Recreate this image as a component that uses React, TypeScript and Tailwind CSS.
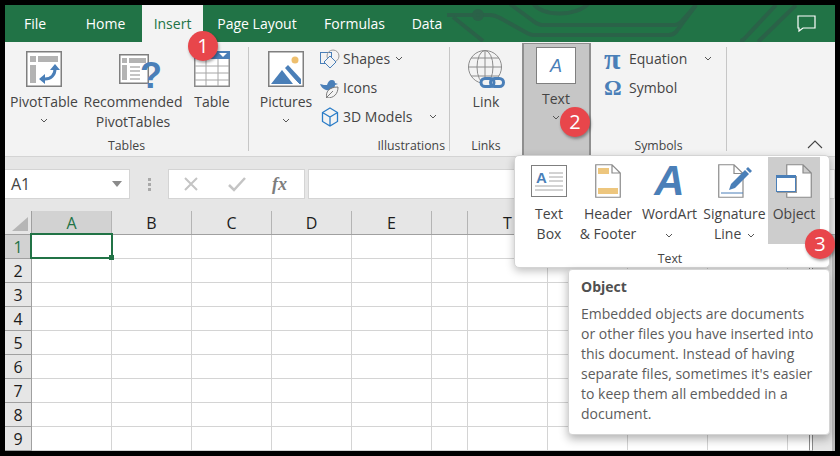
import { ReactNode } from "react";

const Chevron = ({ className = "" }: { className?: string }) => (
  <svg width="8" height="5" viewBox="0 0 8 5" className={className}>
    <path d="M1 1l3 3 3-3" fill="none" stroke="#555" strokeWidth="1" />
  </svg>
);

// ribbon icons
const PivotIcon = () => (
  <svg width="36" height="36" viewBox="0 0 36 36">
    <rect x="0.75" y="0.75" width="34.5" height="34.5" fill="#fff" stroke="#7f7f7f" strokeWidth="1.5" />
    <path d="M4 5h6v6H4zM12 5h20v6H12zM4 14h6v18H4z" fill="#b3b3b3" />
    <path d="M29 18c0 6-4 10-10 10" fill="none" stroke="#4a7fb8" strokeWidth="3" />
    <path d="M24 19l5-6 5 6zM19 23v10l-6-5z" fill="#4a7fb8" />
  </svg>
);

const RecommendedIcon = () => (
  <div className="relative w-[36px] h-[36px] ml-[8px]">
    <svg width="30" height="30" viewBox="0 0 30 30" className="absolute left-0 top-[3px]">
      <rect x="0.75" y="0.75" width="28.5" height="28.5" fill="#fff" stroke="#7f7f7f" strokeWidth="1.5" />
      <path d="M3 4h5v5H3zM10 4h17v5H10zM3 11h5v15H3z" fill="#b3b3b3" />
      <path d="M11 13h10M11 17h10M11 21h10M11 25h10" stroke="#b3b3b3" strokeWidth="1.5" />
    </svg>
    <span className="absolute left-[21px] top-[11px] text-[36px] leading-[27px] font-bold text-[#4a7fb8] font-['Liberation_Sans',sans-serif]">?</span>
  </div>
);

const TableIcon = () => (
  <svg width="36" height="36" viewBox="0 0 36 36">
    <rect x="0.75" y="0.75" width="34.5" height="34.5" fill="#fff" stroke="#8a8a8a" strokeWidth="1.5" />
    <rect x="0" y="0" width="36" height="8" fill="#4a7fb8" />
    <path d="M25 2h8l-4 4z" fill="#fff" />
    <path d="M1 15h34M1 22h34M1 29h34M12 8v27M24 8v27" stroke="#a6a6a6" strokeWidth="1" />
  </svg>
);

const PicturesIcon = () => (
  <svg width="36" height="36" viewBox="0 0 36 36">
    <rect x="0.75" y="0.75" width="34.5" height="34.5" fill="#fff" stroke="#7f7f7f" strokeWidth="1.5" />
    <circle cx="27" cy="9" r="3.5" fill="#eebf6e" />
    <path d="M3 33l11-14 11 14z" fill="#4a7fb8" />
    <path d="M17 17l3-3 13 14v5h-2z" fill="#4a7fb8" />
    <path d="M16 19l15 14" stroke="#fff" strokeWidth="1" />
  </svg>
);

const ShapesIcon = () => (
  <svg width="20" height="20" viewBox="0 0 20 20">
    <rect x="0.5" y="3.5" width="11" height="11" fill="none" stroke="#4a7fb8" />
    <circle cx="13" cy="7" r="6" fill="none" stroke="#9a9a9a" />
    <path d="M10 7l6 6-6 6-6-6z" fill="#f3f3f3" stroke="#4a7fb8" />
  </svg>
);

const IconsIcon = () => (
  <svg width="20" height="20" viewBox="0 0 20 20">
    <path d="M0 6c3 1 5 1 7 1 1-3 2-5 5-5 2 0 3 1 3 3l3 1-3 1c0 4-4 6-9 5-3-1-5-3-6-6z" fill="#4a7fb8" />
    <path d="M7 20c-2-6 2-11 11-11 0 7-4 11-11 11z" fill="#f3f3f3" stroke="#7a7a7a" />
    <path d="M6 20l7-7" stroke="#7a7a7a" />
  </svg>
);

const CubeIcon = () => (
  <svg width="20" height="20" viewBox="0 0 20 20">
    <path d="M10 1l7.5 4.5v9L10 19l-7.5-4.5v-9zM2.5 5.5L10 10l7.5-4.5M10 10v9" fill="none" stroke="#2a7cc7" strokeWidth="1.3" />
  </svg>
);

const LinkIcon = () => (
  <svg width="38" height="38" viewBox="0 0 38 38">
    <g fill="none" stroke="#8c8c8c" strokeWidth="1">
      <circle cx="18" cy="17" r="16.5" />
      <ellipse cx="18" cy="17" rx="8" ry="16.5" />
      <path d="M18 0v33M1 17h34M4 8h28M4 26h28" />
    </g>
    <g fill="none" stroke="#4a7fb8" strokeWidth="3">
      <rect x="14" y="28.5" width="13" height="8" rx="4" fill="#f3f3f3" />
      <rect x="23.5" y="28.5" width="13" height="8" rx="4" />
    </g>
  </svg>
);

const DocOutline = ({ w, h }: { w: number; h: number }) => (
  <path
    d={`M.75.75H${w - 9}L${w - 0.75} 9V${h - 0.75}H.75z M${w - 9} .75V9H${w - 0.75}`}
    fill="#fff"
    stroke="#8a8a8a"
    strokeWidth="1.2"
  />
);

const TextBoxIcon = () => (
  <div className="relative w-[36px] h-[32px] bg-white border border-[#7f7f7f]">
    <span className="absolute left-[4px] top-[3px] text-[15px] leading-[18px] font-bold text-[#4a7fb8] font-['Liberation_Sans',sans-serif]">A</span>
    <svg width="34" height="30" viewBox="0 0 34 30" className="absolute left-0 top-0">
      <path d="M17 7h14M17 11h14M17 15h14M3 20h28M3 24h28" stroke="#a6a6a6" strokeWidth="1" />
    </svg>
  </div>
);

const HeaderFooterIcon = () => (
  <svg width="26" height="34" viewBox="0 0 26 34">
    <DocOutline w={26} h={34} />
    <rect x="3" y="4" width="11" height="6" fill="#edc67e" />
    <rect x="3" y="24" width="20" height="6" fill="#edc67e" />
  </svg>
);

const SignatureIcon = () => (
  <svg width="34" height="34" viewBox="0 0 34 34">
    <path d="M.75.75H16L25 9.5V33.25H.75z M16 .75V9.5H25" fill="#fff" stroke="#8a8a8a" strokeWidth="1.2" />
    <path d="M3 29h22" stroke="#4a7fb8" strokeWidth="1" />
    <path d="M11 26l2-6L27 6l4 4-14 14z" fill="#4a7fb8" />
    <path d="M28 5l2-2 4 4-2 2z" fill="#4a7fb8" />
  </svg>
);

const ObjectIcon = () => (
  <div className="relative w-[36px] h-[34px]">
    <svg width="26" height="34" viewBox="0 0 26 34" className="absolute left-[10px] top-0">
      <DocOutline w={26} h={34} />
    </svg>
    <div className="absolute left-0 top-[11px] w-[20px] h-[17px] bg-white border border-[#4a7fb8] border-t-[3px] shadow-[1px_1px_0_#9a9a9a]" />
  </div>
);

const BlueA = ({ className }: { className: string }) => (
  <span className={`italic text-[#4a7fb8] font-['Liberation_Sans',sans-serif] ${className}`}>A</span>
);

const Badge = ({ n, className }: { n: number; className: string }) => (
  <div className={`absolute z-50 w-[30px] h-[30px] rounded-full bg-[#e8464b] text-white text-[20px] flex items-center justify-center shadow-[1px_2px_3px_rgba(0,0,0,0.35)] ${className}`}>
    {n}
  </div>
);

// big ribbon button: icon on top, one or two label lines, optional chevron
const BigButton = ({ icon, label, width, chevron }: { icon: ReactNode; label: ReactNode; width: string; chevron?: boolean }) => (
  <div className={`flex flex-col items-center ${width}`}>
    <div className="h-[36px] flex items-center justify-center">{icon}</div>
    <div className="mt-[5px] text-center leading-[20px] whitespace-nowrap">{label}</div>
    {chevron && <Chevron className="mt-[6px]" />}
  </div>
);

const SmallRow = ({ icon, label, chevron }: { icon: ReactNode; label: string; chevron?: string }) => (
  <div className="h-[29px] flex items-center">
    <div className="w-[26px] flex justify-center">{icon}</div>
    <span className="whitespace-nowrap">{label}</span>
    {chevron && <Chevron className={chevron} />}
  </div>
);

const GroupLabel = ({ children, className = "" }: { children: ReactNode; className?: string }) => (
  <div className={`h-[20px] text-[12.3px] leading-[20px] ${className}`}>{children}</div>
);

const Sep = () => <div className="w-px bg-[#c6c6c6] my-[5px] shrink-0" />;

const tabs = [
  { label: "File", w: "w-[60px]" },
  { label: "Home", w: "w-[77px] pl-[4px]" },
  { label: "Insert", w: "w-[61px]" },
  { label: "Page Layout", w: "w-[108px]" },
  { label: "Formulas", w: "w-[87px]" },
  { label: "Data", w: "w-[58px]" },
];

function TabBar() {
  return (
    <div className="relative h-[37px] bg-[#217346] flex text-[14px] text-white shrink-0 overflow-hidden">
      <svg width="830" height="37" viewBox="0 0 830 37" className="absolute left-0 top-0">
        <g fill="none" stroke="#2a6248" strokeWidth="4">
          <path d="M442 10h43c5 0 8 2 12 4l25 14c2 1 4 2 6 2h136c3 0 5-1 7-3l20-27" />
          <path d="M505-1l26 19c2 1 4 2 6 2h133c2 0 4-1 6-3l15-17" />
          <path d="M448 12l30 24" />
          <path d="M528-2c8 14 44 14 56 0" />
          <path d="M735 36c2 0 3-1 4-2l32-34" />
          <path d="M753 37l38-37" />
          <circle cx="473" cy="10" r="4" />
        </g>
      </svg>
      <div className="relative flex w-full">
        {tabs.map((t) => (
          <div
            key={t.label}
            className={`${t.w} flex items-center justify-center ${t.label === "Insert" ? "bg-[#f3f3f3] text-[#217346]" : ""}`}
          >
            {t.label}
          </div>
        ))}
        <div className="flex-1 flex justify-end items-center pr-[18px]">
          <svg width="20" height="18" viewBox="0 0 20 18">
            <path d="M1 1h17v12H6l-4 3v-3H1z" fill="none" stroke="#fff" strokeWidth="1.2" />
          </svg>
        </div>
      </div>
    </div>
  );
}

function Ribbon() {
  return (
    <div className="h-[115px] bg-[#f3f3f3] border-b border-[#d4d4d4] flex text-[14px] text-[#444] shrink-0">
      {/* Tables */}
      <div className="w-[243px] flex flex-col shrink-0">
        <div className="flex-1 flex pt-[9px] pl-[3px]">
          <BigButton width="w-[72px]" icon={<PivotIcon />} label="PivotTable" chevron />
          <BigButton
            width="w-[106px]"
            icon={<RecommendedIcon />}
            label={<>Recommended<br />PivotTables</>}
          />
          <BigButton width="w-[52px]" icon={<TableIcon />} label="Table" />
        </div>
        <GroupLabel className="text-center">Tables</GroupLabel>
      </div>
      <Sep />
      {/* Illustrations */}
      <div className="w-[200px] flex flex-col shrink-0">
        <div className="flex-1 flex">
          <div className="pt-[9px] pl-[1px]">
            <BigButton width="w-[72px]" icon={<PicturesIcon />} label="Pictures" chevron />
          </div>
          <div className="pt-[2px] -ml-[5px]">
            <SmallRow icon={<ShapesIcon />} label="Shapes" chevron="ml-[5px]" />
            <SmallRow icon={<IconsIcon />} label="Icons" />
            <SmallRow icon={<CubeIcon />} label="3D Models" chevron="ml-[17px]" />
          </div>
        </div>
        <GroupLabel className="text-right pr-[4px]">Illustrations</GroupLabel>
      </div>
      <Sep />
      {/* Links */}
      <div className="w-[72px] flex flex-col shrink-0">
        <div className="flex-1 flex justify-center pt-[9px]">
          <BigButton width="w-[60px]" icon={<LinkIcon />} label="Link" />
        </div>
        <GroupLabel className="text-center">Links</GroupLabel>
      </div>
      {/* Text, pressed */}
      <div className="w-[69px] mt-px bg-[#c6c6c6] border-x-2 border-t border-[#8f8f8f] flex flex-col items-center pt-[3px] pr-[1px] shrink-0">
        <div className="w-[40px] h-[37px] bg-white border border-[#7f7f7f] flex items-center justify-center">
          <BlueA className="text-[18px] leading-none" />
        </div>
        <div className="mt-[5px] leading-[20px]">Text</div>
        <Chevron className="mt-[6px]" />
      </div>
      {/* Symbols */}
      <div className="w-[135px] flex flex-col shrink-0">
        <div className="flex-1 pt-[2px] pl-[13px]">
          <div className="h-[29px] flex items-center">
            <span className="w-[25px] text-left text-[30px] leading-none font-bold text-[#4a7fb8] font-['Liberation_Serif',serif]">π</span>
            <span>Equation</span>
            <Chevron className="ml-[17px]" />
          </div>
          <div className="h-[29px] flex items-center">
            <span className="w-[25px] text-left text-[22px] leading-none font-bold text-[#4a7fb8] font-['Liberation_Serif',serif]">Ω</span>
            <span>Symbol</span>
          </div>
        </div>
        <GroupLabel className="text-center">Symbols</GroupLabel>
      </div>
      <Sep />
      <div className="flex-1 flex items-end justify-end pr-[12px] pb-[7px]">
        <svg width="16" height="9" viewBox="0 0 16 9">
          <path d="M1 8l7-7 7 7" fill="none" stroke="#444" strokeWidth="1.1" />
        </svg>
      </div>
    </div>
  );
}

function FormulaBar() {
  return (
    <div className="h-[54px] bg-[#e6e6e6] flex items-start pt-[12px] shrink-0">
      <div className="w-[125px] h-[30px] bg-white border border-[#d4d4d4] border-l-0 flex items-center justify-between pl-[6px] pr-[7px] text-[16px] text-[#444]">
        A1
        <svg width="10" height="6" viewBox="0 0 10 6">
          <path d="M0 0h10L5 6z" fill="#8a8a8a" />
        </svg>
      </div>
      <div className="w-[38px] h-[30px] flex flex-col items-center justify-center gap-[2px]">
        <div className="w-[3px] h-[3px] bg-[#a9a9a9]" />
        <div className="w-[3px] h-[3px] bg-[#a9a9a9]" />
        <div className="w-[3px] h-[3px] bg-[#a9a9a9]" />
      </div>
      <div className="w-[137px] h-[30px] bg-white border border-[#d4d4d4] flex items-center text-[#b4b4b4]">
        <svg width="16" height="16" viewBox="0 0 16 16" className="ml-[14px]">
          <path d="M2 2l12 12M14 2L2 14" stroke="#c4c4c4" strokeWidth="2" />
        </svg>
        <svg width="18" height="16" viewBox="0 0 18 16" className="ml-[29px]">
          <path d="M1 9l5 5L17 2" fill="none" stroke="#c4c4c4" strokeWidth="2.5" />
        </svg>
        <span className="ml-[26px] text-[18px] italic font-bold text-[#7d7d7d] font-['Liberation_Serif',serif]">fx</span>
      </div>
      <div className="ml-[3px] flex-1 h-[30px] bg-white border border-[#d4d4d4]" />
    </div>
  );
}

const columns = [
  { w: "w-[80px]", label: "A", active: true },
  { w: "w-[80px]", label: "B" },
  { w: "w-[80px]", label: "C" },
  { w: "w-[80px]", label: "D" },
  { w: "w-[80px]", label: "E" },
  { w: "w-[36px]", label: "" },
  { w: "w-[80px]", label: "T" },
  { w: "w-[80px]", label: "" },
  { w: "w-[80px]", label: "" },
  { w: "w-[80px]", label: "" },
  { w: "w-[22px]", label: "" },
  { w: "w-[3px]", label: "" },
];

function Sheet() {
  return (
    <div className="flex-1 bg-white text-[16px] text-[#1c1c1c]">
      {/* column headers */}
      <div className="h-[24px] flex bg-[#e6e6e6] border-b border-[#a0a0a0]">
        <div className="w-[27px] border-r border-[#a0a0a0] flex items-end justify-end pr-[3px] pb-[3px]">
          <svg width="16" height="14" viewBox="0 0 16 14">
            <path d="M16 0v14H0z" fill="#b6b6b6" />
          </svg>
        </div>
        {columns.map((c, i) => (
          <div
            key={i}
            className={`${c.w} border-r border-[#b4b4b4] flex items-center justify-center leading-none ${c.active ? "bg-[#d2d2d2] text-[#217346]" : ""}`}
          >
            {c.label}
          </div>
        ))}
        <div className="flex-1" />
      </div>
      {/* rows */}
      {[1, 2, 3, 4, 5, 6, 7, 8, 9].map((r) => (
        <div key={r} className="h-[24px] flex">
          <div className={`w-[27px] border-r border-b border-[#a0a0a0] flex items-center justify-center leading-none ${r === 1 ? "bg-[#d2d2d2] text-[#217346]" : "bg-[#e6e6e6]"}`}>
            {r}
          </div>
          {columns.map((c, i) => (
            <div key={i} className={`${c.w} border-r border-b border-[#d4d4d4] relative ${i >= 10 ? "border-r-[#8a8a8a]" : ""}`}>
              {r === 1 && i === 0 && (
                <div className="absolute z-10 left-[-2px] top-[-2px] w-[83px] h-[26px] border-2 border-[#217346]">
                  <div className="absolute right-[-3px] bottom-[-3px] w-[5px] h-[5px] bg-[#217346]" />
                </div>
              )}
            </div>
          ))}
          <div className="flex-1 bg-[#e6e6e6] border-r-[3px] border-[#bdbdbd]" />
        </div>
      ))}
    </div>
  );
}

const popupItems = [
  { w: "w-[58px]", icon: <TextBoxIcon />, label: <>Text<br />Box</> },
  { w: "w-[60px]", icon: <HeaderFooterIcon />, label: <>Header<br />&amp; Footer</> },
  {
    w: "w-[63px]",
    icon: <BlueA className="text-[42px] leading-none font-bold" />,
    label: <>WordArt<br /><Chevron className="inline-block" /></>,
  },
  { w: "w-[67px]", icon: <SignatureIcon />, label: <>Signature<br />Line <Chevron className="inline-block ml-[2px]" /></> },
];

function TextPopup() {
  return (
    <div className="absolute z-30 left-[509px] top-[150px] w-[316px] h-[113px] bg-white rounded-[5px] border border-[#d4d4d4] shadow-[0_3px_8px_rgba(0,0,0,0.25)] text-[14px] text-[#444] flex flex-col">
      <div className="flex pl-[5px] pt-[1px] h-[88px]">
        {popupItems.map((it, i) => (
          <div key={i} className={`${it.w} flex flex-col items-center pt-[7px]`}>
            <div className="h-[34px] flex items-center justify-center">{it.icon}</div>
            <div className="mt-[6px] text-center leading-[20px] whitespace-nowrap">{it.label}</div>
          </div>
        ))}
        <div className="w-[52px] bg-[#cdcdcd] flex flex-col items-center pt-[7px]">
          <div className="h-[34px] flex items-center justify-center"><ObjectIcon /></div>
          <div className="mt-[6px] leading-[20px]">Object</div>
        </div>
      </div>
      <GroupLabel className="text-center mt-[5px] -ml-[4px]">Text</GroupLabel>
    </div>
  );
}

function Tooltip() {
  return (
    <div className="absolute z-40 left-[563px] top-[264px] w-[262px] h-[166px] bg-white rounded-[4px] border border-[#d4d4d4] shadow-[0_4px_10px_rgba(0,0,0,0.3)] pl-[12px] pr-[8px] pt-[7px] text-[14px] text-[#5c5c5c] leading-[20px]">
      <div className="font-bold text-[#505050]">Object</div>
      <div className="mt-[7px]">
        Embedded objects are documents
        <br />or other files you have inserted into
        <br />this document. Instead of having
        <br />separate files, sometimes it's easier
        <br />to keep them all embedded in a
        <br />document.
      </div>
    </div>
  );
}

export default function App() {
  return (
    <div className="w-[840px] h-[456px] bg-black p-[5px] overflow-hidden font-['Open_Sans',sans-serif]">
      <div className="relative w-[830px] h-[446px] flex flex-col">
        <TabBar />
        <Ribbon />
        <FormulaBar />
        <Sheet />
        <TextPopup />
        <Tooltip />
        <Badge n={1} className="left-[183px] top-[26px]" />
        <Badge n={2} className="left-[555px] top-[102px]" />
        <Badge n={3} className="left-[800px] top-[224px]" />
      </div>
    </div>
  );
}
